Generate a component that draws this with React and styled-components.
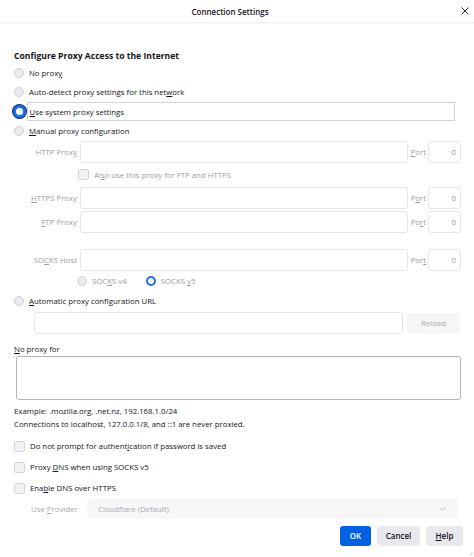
import styled, { createGlobalStyle } from "styled-components"

const GlobalStyle = createGlobalStyle`
  html, body {
    margin: 0;
    padding: 0;
    background: #ffffff;
  }
  body {
    font-family: "Open Sans", "Noto Sans", sans-serif;
    font-size: 7.8px;
    color: #15141a;
    width: 474px;
    height: 557px;
    overflow: hidden;
  }
`

const Dialog = styled.div`
  position: relative;
  width: 474px;
  height: 557px;
  display: flex;
  flex-direction: column;
`

const Header = styled.div`
  height: 22px;
  display: flex;
  align-items: center;
  justify-content: center;
  padding-right: 14px;
  border-bottom: 1px solid #efeff1;
  box-shadow: 0 1px 2px rgba(0, 0, 0, 0.035);
  position: relative;
`

const Title = styled.div`
  font-size: 8px;
  font-weight: 600;
`

const Close = styled.div`
  position: absolute;
  right: 3px;
  top: 5px;
  width: 12px;
  height: 12px;
  display: flex;
  align-items: center;
  justify-content: center;
`

const Body = styled.div`
  padding: 26px 13px 0 14px;
  display: flex;
  flex-direction: column;
`

const Heading = styled.div`
  font-size: 8.6px;
  font-weight: 700;
  line-height: 14px;
`

const Row = styled.div`
  display: flex;
  align-items: center;
  height: ${(p) => p.$h || 19.5}px;
  margin-left: ${(p) => p.$indent || 0}px;
  gap: ${(p) => p.$gap || 4}px;
  color: ${(p) => (p.$disabled ? "#9c9ca3" : "inherit")};
`

const FocusBox = styled.div`
  flex: 1;
  height: 17px;
  display: flex;
  align-items: center;
  border: 1px solid #d4d4d8;
  margin: 0 6px 0 -3px;
  padding-left: 2px;
`

const Radio = styled.span`
  box-sizing: border-box;
  width: ${(p) => (p.$focus ? 13 : 10)}px;
  height: ${(p) => (p.$focus ? 13 : 10)}px;
  border-radius: 50%;
  flex-shrink: 0;
  margin-left: ${(p) => (p.$focus ? -1.5 : 0)}px;
  background: ${(p) => (p.$checked ? "#ffffff" : "#ececf0")};
  border: ${(p) =>
    p.$checked ? `${p.$focus ? 3.5 : 2.5}px solid #1f6fe0` : "1px solid #cfcfd5"};
  box-shadow: ${(p) => (p.$focus ? "0 0 0 1px #0f2f6b" : "none")};
`

const Checkbox = styled.span`
  box-sizing: border-box;
  width: 11px;
  height: 11px;
  border-radius: 2px;
  flex-shrink: 0;
  background: #f2f2f5;
  border: 1px solid #d4d4da;
`

const Key = styled.span`
  text-decoration: underline;
  text-underline-offset: 1px;
  text-decoration-thickness: 0.5px;
`

const FieldRow = styled.div`
  display: flex;
  align-items: center;
  height: 22px;
  margin-top: ${(p) => p.$top || 0}px;
`

const FieldLabel = styled.div`
  box-sizing: border-box;
  width: 66px;
  text-align: right;
  padding-right: 3px;
  color: #9c9ca3;
  white-space: nowrap;
`

const Input = styled.div`
  box-sizing: border-box;
  flex: 1;
  height: 22px;
  border: 1px solid ${(p) => (p.$enabled ? "#b9b9c0" : "#e6e6ea")};
  border-radius: 3px;
  background: #ffffff;
`

const PortLabel = styled.div`
  color: #9c9ca3;
  padding: 0 2px 0 3px;
`

const PortInput = styled.div`
  box-sizing: border-box;
  width: 33px;
  height: 22px;
  border: 1px solid #e6e6ea;
  border-radius: 3px;
  display: flex;
  align-items: center;
  justify-content: flex-end;
  padding-right: 4px;
  color: #9c9ca3;
`

const UrlRow = styled.div`
  display: flex;
  align-items: center;
  gap: 4px;
  margin: 2px 1px 0 20px;
  height: 21px;
`

const GhostButton = styled.div`
  width: 53px;
  height: 21px;
  border-radius: 3px;
  background: #f6f6f8;
  color: #a9a9b0;
  display: flex;
  align-items: center;
  justify-content: center;
`

const Label = styled.div`
  height: ${(p) => p.$h || 14}px;
  display: flex;
  align-items: center;
  margin-top: ${(p) => p.$top || 0}px;
`

const TextArea = styled.div`
  box-sizing: border-box;
  height: 44px;
  margin: 0 0 0 2px;
  border: 1px solid #b4b4bb;
  border-radius: 3px;
`

const Select = styled.div`
  box-sizing: border-box;
  flex: 1;
  height: 20px;
  margin-right: 3px;
  background: #f7f7f9;
  border-radius: 3px;
  display: flex;
  align-items: center;
  justify-content: space-between;
  padding: 0 12px 0 11px;
  color: #a9a9b0;
`

const ProviderLabel = styled.div`
  box-sizing: border-box;
  width: 69px;
  color: #a9a9b0;
  padding-left: 17px;
`

const Buttons = styled.div`
  display: flex;
  justify-content: flex-end;
  gap: 6px;
  margin-top: 6px;
  margin-right: -2px;
`

const Button = styled.div`
  width: ${(p) => p.$w}px;
  height: 20px;
  border-radius: 3px;
  display: flex;
  align-items: center;
  justify-content: center;
  font-weight: 600;
  font-size: 8px;
  background: ${(p) => (p.$primary ? "#0061e0" : "#e9e9ed")};
  color: ${(p) => (p.$primary ? "#ffffff" : "#15141a")};
`

const Grip = styled.svg`
  position: absolute;
  right: 1px;
  bottom: 1px;
`

export default function App() {
  return (
    <Dialog>
      <GlobalStyle />
      <Header>
        <Title>Connection Settings</Title>
        <Close>
          <svg width="8" height="8" viewBox="0 0 8 8">
            <path d="M0.5 0.5 L7.5 7.5 M7.5 0.5 L0.5 7.5" stroke="#15141a" strokeWidth="0.9" />
          </svg>
        </Close>
      </Header>
      <Body>
        <Heading>Configure Proxy Access to the Internet</Heading>
        <Row $gap={5}>
          <Radio />
          <span>No prox<Key>y</Key></span>
        </Row>
        <Row $gap={5}>
          <Radio />
          <span>Auto-detect proxy settings for this net<Key>w</Key>ork</span>
        </Row>
        <Row $gap={0}>
          <Radio $checked $focus />
          <FocusBox>
            <span><Key>U</Key>se system proxy settings</span>
          </FocusBox>
        </Row>
        <Row $gap={5}>
          <Radio />
          <span><Key>M</Key>anual proxy configuration</span>
        </Row>

        <FieldRow>
          <FieldLabel>HTTP Prox<Key>y</Key></FieldLabel>
          <Input />
          <PortLabel><Key>P</Key>ort</PortLabel>
          <PortInput>0</PortInput>
        </FieldRow>
        <Row $h={23} $indent={64} $gap={5} $disabled>
          <Checkbox />
          <span>Al<Key>s</Key>o use this proxy for FTP and HTTPS</span>
        </Row>
        <FieldRow $top={1}>
          <FieldLabel><Key>H</Key>TTPS Proxy</FieldLabel>
          <Input />
          <PortLabel>P<Key>o</Key>rt</PortLabel>
          <PortInput>0</PortInput>
        </FieldRow>
        <FieldRow $top={2}>
          <FieldLabel><Key>F</Key>TP Proxy</FieldLabel>
          <Input />
          <PortLabel>Po<Key>r</Key>t</PortLabel>
          <PortInput>0</PortInput>
        </FieldRow>
        <FieldRow $top={16}>
          <FieldLabel>SO<Key>C</Key>KS Host</FieldLabel>
          <Input />
          <PortLabel>Por<Key>t</Key></PortLabel>
          <PortInput>0</PortInput>
        </FieldRow>
        <Row $h={20} $indent={63} $gap={5} $disabled>
          <Radio />
          <span style={{ marginRight: 14 }}>SOC<Key>K</Key>S v4</span>
          <Radio $checked />
          <span>SOCKS <Key>v</Key>5</span>
        </Row>
        <Row $gap={5}>
          <Radio />
          <span><Key>A</Key>utomatic proxy configuration URL</span>
        </Row>
        <UrlRow>
          <Input />
          <GhostButton>Reload</GhostButton>
        </UrlRow>
        <Label $top={8}>
          <span><Key>N</Key>o proxy for</span>
        </Label>
        <TextArea />
        <Label $top={4}>Example: .mozilla.org, .net.nz, 192.168.1.0/24</Label>
        <Label $top={-1}>Connections to localhost, 127.0.0.1/8, and ::1 are never proxied.</Label>
        <Row $h={21} $gap={5} style={{ marginTop: 5 }}>
          <Checkbox />
          <span>Do not prompt for authent<Key>i</Key>cation if password is saved</span>
        </Row>
        <Row $h={21} $gap={5}>
          <Checkbox />
          <span>Proxy <Key>D</Key>NS when using SOCKS v5</span>
        </Row>
        <Row $h={21} $gap={5}>
          <Checkbox />
          <span>Ena<Key>b</Key>le DNS over HTTPS</span>
        </Row>
        <Row $h={21} $gap={0}>
          <ProviderLabel>Use <Key>P</Key>rovider</ProviderLabel>
          <Select>
            <span>Cloudflare (Default)</span>
            <svg width="7" height="4" viewBox="0 0 7 4">
              <path d="M0.5 0.5 L3.5 3.3 L6.5 0.5" fill="none" stroke="#b8b8be" strokeWidth="0.8" />
            </svg>
          </Select>
        </Row>
        <Buttons>
          <Button $primary $w={31}>OK</Button>
          <Button $w={43}>Cancel</Button>
          <Button $w={37}><Key>H</Key>elp</Button>
        </Buttons>
      </Body>
      <Grip width="5" height="5" viewBox="0 0 5 5">
        <path d="M4.5 1 L1 4.5 M4.5 3 L3 4.5" stroke="#b0b0b6" strokeWidth="0.6" />
      </Grip>
    </Dialog>
  )
}
